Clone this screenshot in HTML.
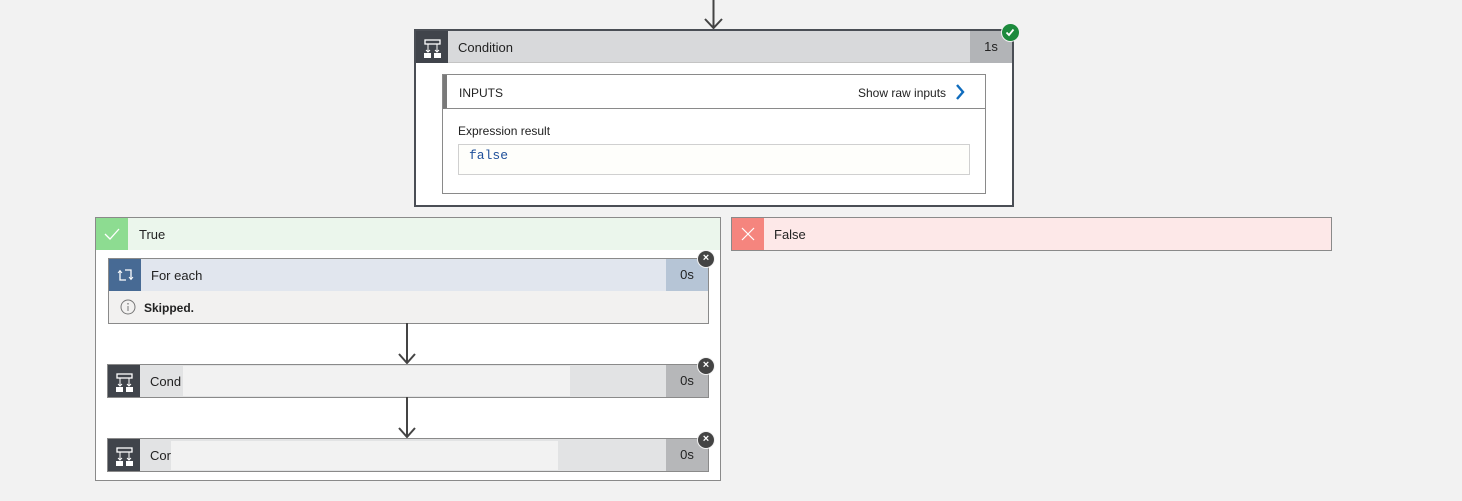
<!DOCTYPE html>
<html><head><style>
*{box-sizing:border-box;margin:0;padding:0}
body{width:1462px;height:501px;background:#f2f2f2;position:relative;overflow:hidden;font-family:"Liberation Sans",sans-serif;font-size:13px;color:#222}
.a{position:absolute}
.ic svg{display:block}
.close{position:absolute;width:18px;height:18px;border-radius:50%;background:#444;border:1.5px solid #f2f2f2;color:#fff;font-size:11px;font-weight:bold;text-align:center;line-height:15px}
</style></head><body>
<svg class="a" style="left:700px;top:0" width="28" height="30"><line x1="13.5" y1="0" x2="13.5" y2="28" stroke="#444" stroke-width="2"/><polyline points="5,19 13.5,28 22,19" fill="none" stroke="#444" stroke-width="2"/></svg>

<!-- Condition card -->
<div class="a" style="left:414px;top:29px;width:600px;height:178px;border:2px solid #4a4e55;background:#fff"></div>
<div class="a" style="left:416px;top:31px;width:596px;height:32px;background:#d8d9db;border-bottom:1px solid #c4c4c4"></div>
<div class="a ic" style="left:416px;top:31px;width:32px;height:32px;background:#40444b">
<svg width="32" height="32"><rect x="9" y="9" width="15" height="4" fill="none" stroke="#fff" stroke-width="1.3"/><line x1="12" y1="13" x2="12" y2="21" stroke="#fff"/><line x1="21" y1="13" x2="21" y2="21" stroke="#fff"/><polyline points="10,19 12,21 14,19" fill="none" stroke="#fff"/><polyline points="19,19 21,21 23,19" fill="none" stroke="#fff"/><rect x="8" y="22" width="7" height="5" fill="#fff"/><rect x="18" y="22" width="7" height="5" fill="#fff"/></svg></div>
<div class="a" style="left:458px;top:40px;font-size:13px">Condition</div>
<div class="a" style="left:970px;top:31px;width:42px;height:32px;background:#b2b4b7;text-align:center;line-height:32px">1s</div>
<div class="a" style="left:1001px;top:23px;width:19px;height:19px;border-radius:50%;background:#1c8a3c;border:1.5px solid #f2f2f2"><svg width="16" height="16"><polyline points="4.5,8.5 7,11 11.5,5.5" fill="none" stroke="#fff" stroke-width="1.8"/></svg></div>

<div class="a" style="left:442px;top:74px;width:544px;height:120px;border:1px solid #8a8a8a;background:#fff"></div>
<div class="a" style="left:443px;top:75px;width:542px;height:34px;border-left:4px solid #7a7a7a;border-bottom:1px solid #8a8a8a"></div>
<div class="a" style="left:459px;top:86px;font-size:12px">INPUTS</div>
<div class="a" style="left:858px;top:86px;font-size:12px">Show raw inputs</div>
<svg class="a" style="left:954px;top:83px" width="12" height="18"><polyline points="3,2 9,9 3,16" fill="none" stroke="#0f6cbd" stroke-width="2.4"/></svg>
<div class="a" style="left:458px;top:124px;font-size:12px">Expression result</div>
<div class="a" style="left:458px;top:144px;width:512px;height:31px;border:1px solid #d0d0d0;background:#fefefb;padding:3px 0 0 10px;font-family:'Liberation Mono',monospace;color:#1e4f9a;font-size:13px">false</div>

<!-- True -->
<div class="a" style="left:95px;top:217px;width:626px;height:264px;border:1px solid #8a8a8a;background:#fff"></div>
<div class="a" style="left:96px;top:218px;width:624px;height:32px;background:#ebf6ec"></div>
<div class="a" style="left:96px;top:218px;width:32px;height:32px;background:#8ddc91"><svg width="32" height="32"><polyline points="9,16 14,21 23,11" fill="none" stroke="#fff" stroke-width="1.3"/></svg></div>
<div class="a" style="left:139px;top:227px">True</div>

<!-- For each -->
<div class="a" style="left:108px;top:258px;width:601px;height:66px;border:1px solid #8a8a8a;background:#f2f1f0"></div>
<div class="a" style="left:109px;top:259px;width:599px;height:32px;background:#e1e6ee"></div>
<div class="a" style="left:109px;top:259px;width:32px;height:32px;background:#476a94"><svg width="32" height="32"><path d="M11 12 V21 H17" fill="none" stroke="#fff" stroke-width="1.3"/><polyline points="9,14 11,11.5 13,14" fill="none" stroke="#fff"/><path d="M16 11 H22 V20" fill="none" stroke="#fff" stroke-width="1.3"/><polyline points="20,18 22,20.5 24,18" fill="none" stroke="#fff"/></svg></div>
<div class="a" style="left:151px;top:268px">For each</div>
<div class="a" style="left:666px;top:259px;width:42px;height:32px;background:#b6c5d6;text-align:center;line-height:32px">0s</div>
<div class="close" style="left:697px;top:250px">×</div>
<svg class="a" style="left:120px;top:299px" width="16" height="16"><circle cx="8" cy="8" r="7" fill="none" stroke="#777"/><line x1="8" y1="7" x2="8" y2="12" stroke="#777"/><circle cx="8" cy="4.8" r=".8" fill="#777"/></svg>
<div class="a" style="left:144px;top:301px;font-weight:bold;font-size:12px">Skipped.</div>

<svg class="a" style="left:394px;top:323px" width="28" height="42"><line x1="13" y1="0" x2="13" y2="40" stroke="#444" stroke-width="2"/><polyline points="5,31 13,40 21,31" fill="none" stroke="#444" stroke-width="2"/></svg>

<!-- Cond -->
<div class="a" style="left:107px;top:364px;width:602px;height:34px;border:1px solid #8a8a8a;background:#e2e3e4"></div>
<div class="a" style="left:183px;top:366px;width:387px;height:30px;background:#f2f2f2"></div>
<div class="a" style="left:108px;top:365px;width:32px;height:32px;background:#40444b"><svg width="32" height="32"><rect x="9" y="9" width="15" height="4" fill="none" stroke="#fff" stroke-width="1.3"/><line x1="12" y1="13" x2="12" y2="21" stroke="#fff"/><line x1="21" y1="13" x2="21" y2="21" stroke="#fff"/><polyline points="10,19 12,21 14,19" fill="none" stroke="#fff"/><polyline points="19,19 21,21 23,19" fill="none" stroke="#fff"/><rect x="8" y="22" width="7" height="5" fill="#fff"/><rect x="18" y="22" width="7" height="5" fill="#fff"/></svg></div>
<div class="a" style="left:150px;top:374px">Cond</div>
<div class="a" style="left:666px;top:365px;width:42px;height:32px;background:#b6b7b9;text-align:center;line-height:32px">0s</div>
<div class="close" style="left:697px;top:357px">×</div>

<svg class="a" style="left:394px;top:397px" width="28" height="42"><line x1="13" y1="0" x2="13" y2="40" stroke="#444" stroke-width="2"/><polyline points="5,31 13,40 21,31" fill="none" stroke="#444" stroke-width="2"/></svg>

<!-- Cor -->
<div class="a" style="left:107px;top:438px;width:602px;height:34px;border:1px solid #8a8a8a;background:#e2e3e4"></div>
<div class="a" style="left:171px;top:441px;width:387px;height:29px;background:#f2f2f2"></div>
<div class="a" style="left:108px;top:439px;width:32px;height:32px;background:#40444b"><svg width="32" height="32"><rect x="9" y="9" width="15" height="4" fill="none" stroke="#fff" stroke-width="1.3"/><line x1="12" y1="13" x2="12" y2="21" stroke="#fff"/><line x1="21" y1="13" x2="21" y2="21" stroke="#fff"/><polyline points="10,19 12,21 14,19" fill="none" stroke="#fff"/><polyline points="19,19 21,21 23,19" fill="none" stroke="#fff"/><rect x="8" y="22" width="7" height="5" fill="#fff"/><rect x="18" y="22" width="7" height="5" fill="#fff"/></svg></div>
<div class="a" style="left:150px;top:448px">Cor</div>
<div class="a" style="left:666px;top:439px;width:42px;height:32px;background:#b6b7b9;text-align:center;line-height:32px">0s</div>
<div class="close" style="left:697px;top:431px">×</div>

<!-- False -->
<div class="a" style="left:731px;top:217px;width:601px;height:34px;border:1px solid #8a8a8a;background:#fde8e8"></div>
<div class="a" style="left:732px;top:218px;width:32px;height:32px;background:#f5857e"><svg width="32" height="32"><line x1="10" y1="10" x2="22" y2="22" stroke="#fff" stroke-width="1.2"/><line x1="22" y1="10" x2="10" y2="22" stroke="#fff" stroke-width="1.2"/></svg></div>
<div class="a" style="left:774px;top:227px">False</div>
</body></html>
